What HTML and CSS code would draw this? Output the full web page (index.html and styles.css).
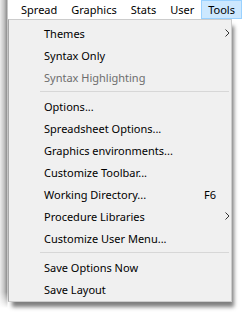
FILE: index.html
```html
<!DOCTYPE html>
<html>
<head>
<meta charset="utf-8">
<link rel="stylesheet" href="styles.css">
</head>
<body>
<div class="screen">
  <div class="menubar">
    <span class="mb-item">Spread</span>
    <span class="mb-item">Graphics</span>
    <span class="mb-item">Stats</span>
    <span class="mb-item">User</span>
    <span class="mb-item active">Tools</span>
  </div>
  <div class="dropdown">
    <div class="row"><span class="label">Themes</span><span class="key"></span><span class="sub"><svg width="5" height="8" viewBox="0 0 5 8"><path d="M0.5 0.5 L4 4 L0.5 7.5" fill="none" stroke="#333" stroke-width="1"/></svg></span></div>
    <div class="row"><span class="label">Syntax Only</span><span class="key"></span><span class="sub"></span></div>
    <div class="row disabled"><span class="label">Syntax Highlighting</span><span class="key"></span><span class="sub"></span></div>
    <div class="sep"></div>
    <div class="row"><span class="label">Options...</span><span class="key"></span><span class="sub"></span></div>
    <div class="row"><span class="label">Spreadsheet Options...</span><span class="key"></span><span class="sub"></span></div>
    <div class="row"><span class="label">Graphics environments...</span><span class="key"></span><span class="sub"></span></div>
    <div class="row"><span class="label">Customize Toolbar...</span><span class="key"></span><span class="sub"></span></div>
    <div class="row"><span class="label">Working Directory...</span><span class="key">F6</span><span class="sub"></span></div>
    <div class="row"><span class="label">Procedure Libraries</span><span class="key"></span><span class="sub"><svg width="5" height="8" viewBox="0 0 5 8"><path d="M0.5 0.5 L4 4 L0.5 7.5" fill="none" stroke="#333" stroke-width="1"/></svg></span></div>
    <div class="row"><span class="label">Customize User Menu...</span><span class="key"></span><span class="sub"></span></div>
    <div class="sep"></div>
    <div class="row"><span class="label">Save Options Now</span><span class="key"></span><span class="sub"></span></div>
    <div class="row"><span class="label">Save Layout</span><span class="key"></span><span class="sub"></span></div>
  </div>
</div>
</body>
</html>
```
FILE: styles.css
```css
html, body {
  margin: 0;
  padding: 0;
  background: #fff;
}
body {
  width: 242px;
  height: 312px;
  overflow: hidden;
  font-family: "Noto Sans", "Open Sans", sans-serif;
  font-size: 11px;
  color: #000;
}
.screen {
  display: flex;
  flex-direction: column;
  padding-left: 8px;
  background:
    linear-gradient(to bottom, rgba(255,255,255,0) 0, rgba(255,255,255,0) 292px, #fff 308px),
    linear-gradient(to right, #ececec 0, #c4c4c4 4px, #8e8e8e 7px, #fff 8px);
  background-repeat: no-repeat;
  background-size: 8px 312px, 8px 312px;
  height: 312px;
  box-sizing: border-box;
}
.menubar {
  display: flex;
  height: 19px;
  background: #fff;
  padding-left: 6px;
  align-items: stretch;
}
.mb-item {
  display: flex;
  align-items: center;
  padding: 0 7px;
  line-height: 19px;
}
.mb-item.active {
  background: #cce8ff;
  border: 1px solid #99d1ff;
  padding: 0 6px;
  flex: 1;
  line-height: 17px;
}
.dropdown {
  width: 224px;
  box-sizing: border-box;
  background: #f0f0f0;
  border: 1px solid #cccccc;
  border-left-color: #a8a8a8;
  padding: 2px 0 1px;
  display: flex;
  flex-direction: column;
  box-shadow: 3px 6px 4px -1px rgba(0,0,0,0.5);
}
.row {
  display: flex;
  align-items: center;
  height: 22px;
  padding-left: 35px;
}
.label {
  flex: 1;
  white-space: nowrap;
}
.key {
  white-space: nowrap;
}
.sub {
  width: 15px;
  display: flex;
  align-items: center;
  padding-left: 9px;
  box-sizing: border-box;
}
.sub svg {
  display: block;
}
.disabled {
  color: #6d6d6d;
}
.sep {
  height: 7px;
  display: flex;
  align-items: center;
  margin: 0 2px 0 31px;
}
.sep::before {
  content: "";
  flex: 1;
  height: 1px;
  background: #d7d7d7;
}
```
